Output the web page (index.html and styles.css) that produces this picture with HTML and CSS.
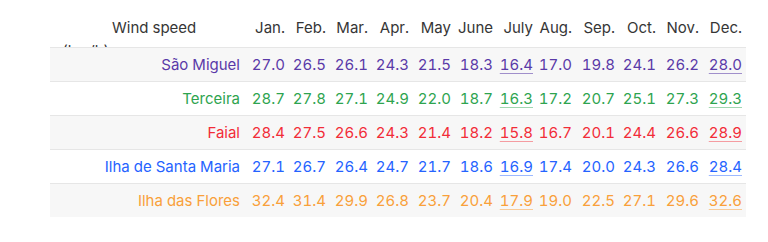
FILE: index.html
```html
<!DOCTYPE html>
<html>
<head>
<meta charset="utf-8">
<link rel="stylesheet" href="styles.css">
</head>
<body>
<div class="table">
  <div class="row head">
    <div class="label"><span class="l1">Wind speed</span><span class="l2">(km/h)</span></div>
    <div class="c">Jan.</div><div class="c">Feb.</div><div class="c">Mar.</div><div class="c">Apr.</div><div class="c">May</div><div class="c">June</div><div class="c">July</div><div class="c">Aug.</div><div class="c">Sep.</div><div class="c">Oct.</div><div class="c">Nov.</div><div class="c">Dec.</div>
  </div>
  <div class="row shade purple">
    <div class="label">São Miguel</div>
    <div class="c">27.0</div><div class="c">26.5</div><div class="c">26.1</div><div class="c">24.3</div><div class="c">21.5</div><div class="c">18.3</div><div class="c"><u>16.4</u></div><div class="c">17.0</div><div class="c">19.8</div><div class="c">24.1</div><div class="c">26.2</div><div class="c"><u>28.0</u></div>
  </div>
  <div class="row green">
    <div class="label">Terceira</div>
    <div class="c">28.7</div><div class="c">27.8</div><div class="c">27.1</div><div class="c">24.9</div><div class="c">22.0</div><div class="c">18.7</div><div class="c"><u>16.3</u></div><div class="c">17.2</div><div class="c">20.7</div><div class="c">25.1</div><div class="c">27.3</div><div class="c"><u>29.3</u></div>
  </div>
  <div class="row shade red">
    <div class="label">Faial</div>
    <div class="c">28.4</div><div class="c">27.5</div><div class="c">26.6</div><div class="c">24.3</div><div class="c">21.4</div><div class="c">18.2</div><div class="c"><u>15.8</u></div><div class="c">16.7</div><div class="c">20.1</div><div class="c">24.4</div><div class="c">26.6</div><div class="c"><u>28.9</u></div>
  </div>
  <div class="row blue">
    <div class="label">Ilha de Santa Maria</div>
    <div class="c">27.1</div><div class="c">26.7</div><div class="c">26.4</div><div class="c">24.7</div><div class="c">21.7</div><div class="c">18.6</div><div class="c"><u>16.9</u></div><div class="c">17.4</div><div class="c">20.0</div><div class="c">24.3</div><div class="c">26.6</div><div class="c"><u>28.4</u></div>
  </div>
  <div class="row shade orange">
    <div class="label">Ilha das Flores</div>
    <div class="c">32.4</div><div class="c">31.4</div><div class="c">29.9</div><div class="c">26.8</div><div class="c">23.7</div><div class="c">20.4</div><div class="c"><u>17.9</u></div><div class="c">19.0</div><div class="c">22.5</div><div class="c">27.1</div><div class="c">29.6</div><div class="c"><u>32.6</u></div>
  </div>
</div>
</body>
</html>
```
FILE: styles.css
```css
html, body {
  margin: 0;
  padding: 0;
  background: #ffffff;
}
body {
  font-family: "Inter", "Liberation Sans", sans-serif;
  font-size: 15px;
  font-variant-numeric: tabular-nums;
}
.table {
  margin-left: 50px;
  width: 696px;
}
.row {
  display: grid;
  grid-template-columns: 198px 41px 41px 42px 41px 42px 42px 40px 39px 43px 41px 43px 43px;
  align-items: center;
  height: 34px;
  box-sizing: border-box;
  border-top: 1.5px solid #e6e6e6;
}
.row.head {
  height: 47px;
  border-top: none;
  align-items: start;
  overflow: hidden;
  color: #363636;
  line-height: 20px;
  padding-top: 18px;
}
.head .label {
  display: flex;
  flex-direction: column;
  text-align: left;
}
.head .l1 { padding-left: 62px; }
.head .l2 { padding-left: 12px; margin-top: 3px; }
.shade { background: #f7f7f7; }
.label {
  text-align: right;
  padding-right: 8px;
}
.c {
  text-align: right;
  padding-right: 4px;
}
u {
  text-decoration-thickness: 1px;
  text-underline-offset: 3px;
}
.purple { color: #5a3aa8; }
.purple u { text-decoration-color: rgba(90,58,168,0.55); }
.green { color: #2ea44f; }
.green u { text-decoration-color: rgba(46,164,79,0.45); }
.red { color: #f22c38; }
.red u { text-decoration-color: rgba(242,44,56,0.45); }
.blue { color: #2563ff; }
.blue u { text-decoration-color: rgba(37,99,255,0.45); }
.orange { color: #f9a03a; }
.orange u { text-decoration-color: rgba(249,160,58,0.5); }
```
